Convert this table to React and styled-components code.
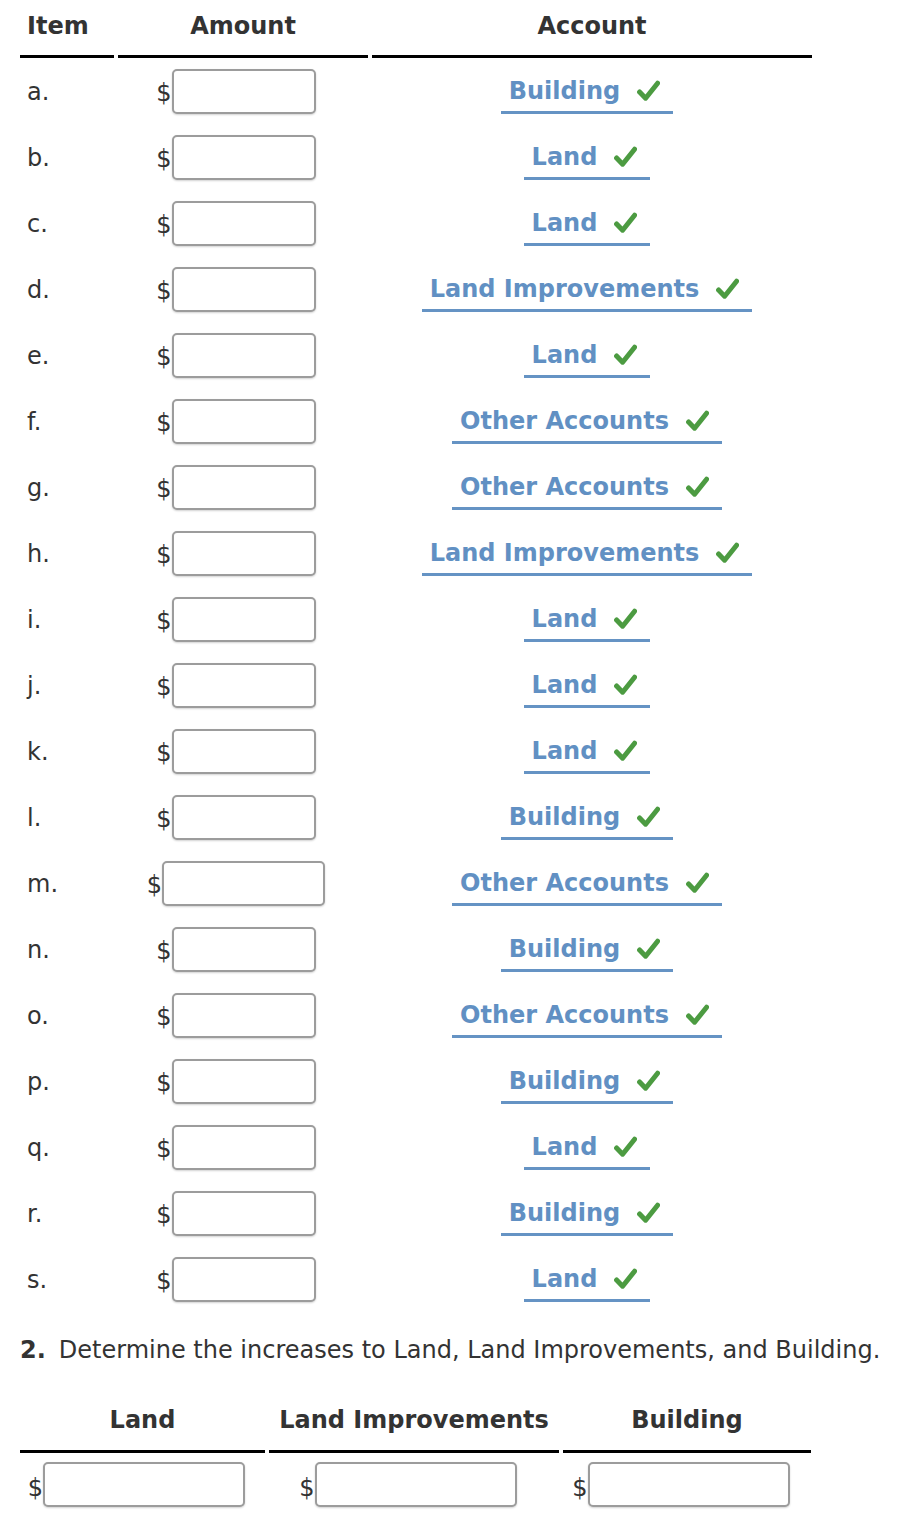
import React from "react";
import styled, { createGlobalStyle } from "styled-components";

const Global = createGlobalStyle`
  html, body { margin: 0; padding: 0; background: #fff; }
  body { font-family: "DejaVu Sans", Verdana, sans-serif; color: #333; font-size: 24px; }
`;

const Page = styled.div`
  width: 898px;
  padding: 0 0 0 20px;
  box-sizing: border-box;
`;

const Grid = styled.div`
  display: grid;
  grid-template-columns: ${(p) => p.cols};
  column-gap: 4px;
`;

const HeadCell = styled.div`
  height: ${(p) => p.h || 58}px;
  border-bottom: 3px solid #000;
  display: flex;
  align-items: center;
  justify-content: ${(p) => (p.left ? "flex-start" : "center")};
  padding-left: ${(p) => (p.left ? "7px" : "0")};
  padding-bottom: ${(p) => (p.pb === undefined ? 4 : p.pb)}px;
  padding-top: ${(p) => p.pt || 0}px;
  box-sizing: border-box;
  font-weight: bold;
  color: #333;
`;

const ItemCell = styled.div`
  height: 66px;
  display: flex;
  align-items: center;
  padding-left: 7px;
  padding-top: 2px;
  box-sizing: border-box;
`;

const AmountCell = styled.div`
  height: 66px;
  display: flex;
  align-items: center;
  justify-content: center;
  padding-right: 14px;
  box-sizing: border-box;
`;

const Dollar = styled.span`
  line-height: 1;
  padding-top: 4px;
`;

const Field = styled.input`
  width: ${(p) => p.w}px;
  height: 45px;
  box-sizing: border-box;
  border: 2px solid #9c9c9c;
  border-radius: 5px;
  box-shadow: 0 1px 2px rgba(0, 0, 0, 0.18);
  background: #fff;
  margin: 0;
  padding: 0 6px;
  font: inherit;
  outline: none;
`;

const AccountCell = styled.div`
  height: 66px;
  display: flex;
  justify-content: center;
  align-items: flex-end;
  padding-right: 10px;
  padding-bottom: 10px;
  box-sizing: border-box;
`;

const AccountTag = styled.div`
  display: inline-flex;
  align-items: center;
  gap: 17px;
  padding: 0 13px 5px 8px;
  line-height: 30px;
  border-bottom: 3px solid #6593c4;
  color: #6190c3;
  font-weight: bold;
`;

const Check = () => (
  <svg width="23" height="22" viewBox="0 0 23 22">
    <path
      d="M2.6 12 L8.6 18.2 L20.6 3.2"
      fill="none"
      stroke="#4c9b41"
      strokeWidth="5"
      strokeLinecap="round"
      strokeLinejoin="round"
    />
  </svg>
);

const Question = styled.p`
  margin: 0;
  height: 76px;
  display: flex;
  align-items: center;
  box-sizing: border-box;
  white-space: nowrap;
`;

const Num = styled.b`
  margin-right: 13px;
`;

const BottomCell = styled(AmountCell)`
  height: 60px;
  align-items: flex-start;
  padding-top: 9px;
  padding-right: 12px;
`;

const rows = [
  ["a.", "Building"],
  ["b.", "Land"],
  ["c.", "Land"],
  ["d.", "Land Improvements"],
  ["e.", "Land"],
  ["f.", "Other Accounts"],
  ["g.", "Other Accounts"],
  ["h.", "Land Improvements"],
  ["i.", "Land"],
  ["j.", "Land"],
  ["k.", "Land"],
  ["l.", "Building"],
  ["m.", "Other Accounts"],
  ["n.", "Building"],
  ["o.", "Other Accounts"],
  ["p.", "Building"],
  ["q.", "Land"],
  ["r.", "Building"],
  ["s.", "Land"],
];

const BottomDollar = styled(Dollar)`
  padding-top: 14px;
`;

export default function App() {
  return (
    <Page>
      <Global />
      <Grid cols="94px 250px 440px">
        <HeadCell left>Item</HeadCell>
        <HeadCell>Amount</HeadCell>
        <HeadCell>Account</HeadCell>
        {rows.map(([item, acct]) => (
          <React.Fragment key={item}>
            <ItemCell>{item}</ItemCell>
            <AmountCell>
              <Dollar>$</Dollar>
              <Field w={item === "m." ? 163 : 144} />
            </AmountCell>
            <AccountCell>
              <AccountTag>
                {acct}
                <Check />
              </AccountTag>
            </AccountCell>
          </React.Fragment>
        ))}
      </Grid>
      <Question>
        <Num>2.</Num>Determine the increases to Land, Land Improvements, and Building.
      </Question>
      <Grid cols="245px 290px 248px">
        <HeadCell h={65} pb={0} pt={2}>Land</HeadCell>
        <HeadCell h={65} pb={0} pt={2}>Land Improvements</HeadCell>
        <HeadCell h={65} pb={0} pt={2}>Building</HeadCell>
        {[0, 1, 2].map((i) => (
          <BottomCell key={i}>
            <BottomDollar>$</BottomDollar>
            <Field w={202} />
          </BottomCell>
        ))}
      </Grid>
    </Page>
  );
}
